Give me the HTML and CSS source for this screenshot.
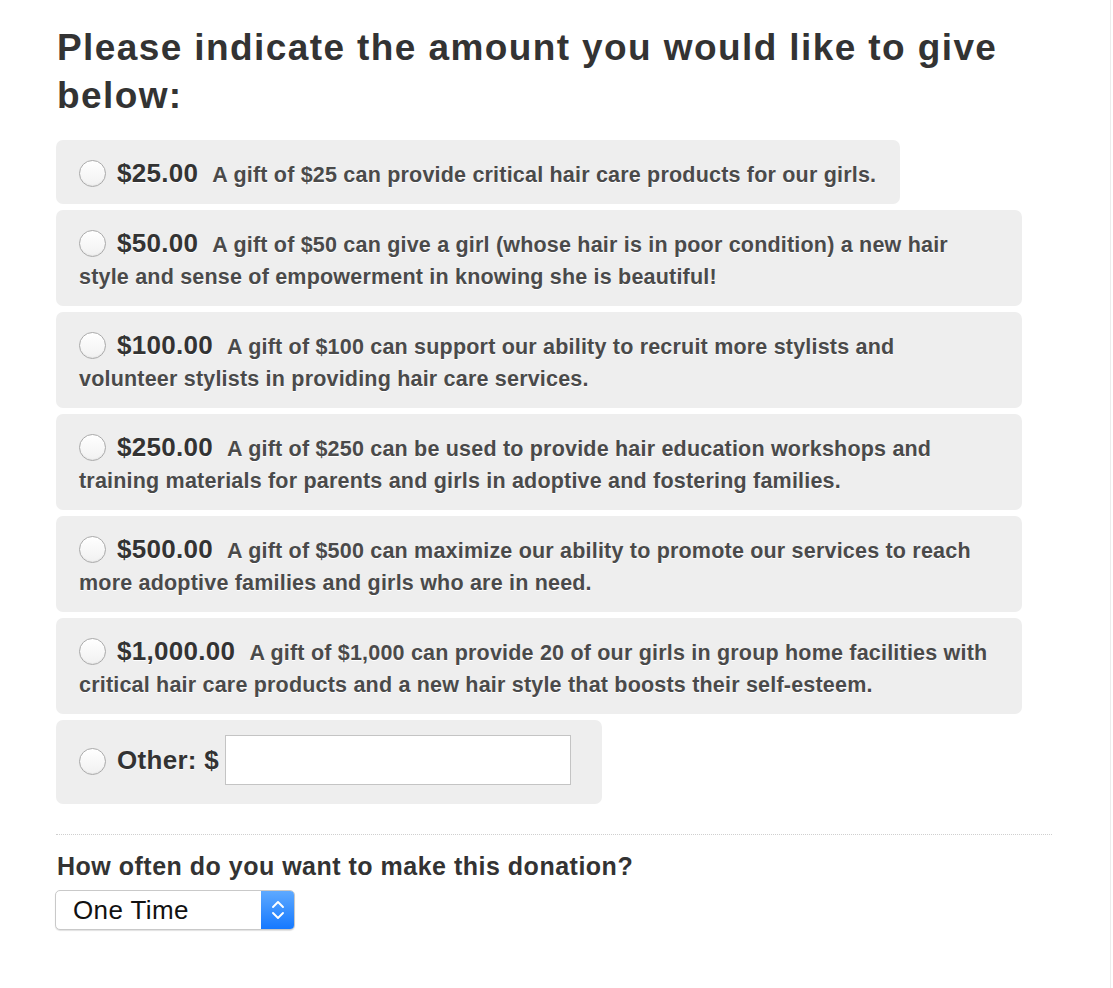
FILE: index.html
```html
<!DOCTYPE html>
<html lang="en">
<head>
<meta charset="utf-8">
<title>Donation amount</title>
<link rel="stylesheet" href="styles.css">
</head>
<body>
<div class="frame">
  <div class="page">
    <h2 class="title">Please indicate the amount you would like to give below:</h2>
    <div class="options">
      <label class="option"><input class="radio" type="radio" name="amt"><span class="amount">$25.00</span><span class="desc">A gift of $25 can provide critical hair care products for our girls.</span></label>
      <label class="option"><input class="radio" type="radio" name="amt"><span class="amount">$50.00</span><span class="desc">A gift of $50 can give a girl (whose hair is in poor condition) a new hair style and sense of empowerment in knowing she is beautiful!</span></label>
      <label class="option"><input class="radio" type="radio" name="amt"><span class="amount">$100.00</span><span class="desc">A gift of $100 can support our ability to recruit more stylists and volunteer stylists in providing hair care services.</span></label>
      <label class="option"><input class="radio" type="radio" name="amt"><span class="amount">$250.00</span><span class="desc">A gift of $250 can be used to provide hair education workshops and training materials for parents and girls in adoptive and fostering families.</span></label>
      <label class="option"><input class="radio" type="radio" name="amt"><span class="amount">$500.00</span><span class="desc">A gift of $500 can maximize our ability to promote our services to reach more adoptive families and girls who are in need.</span></label>
      <label class="option"><input class="radio" type="radio" name="amt"><span class="amount">$1,000.00</span><span class="desc">A gift of $1,000 can provide 20 of our girls in group home facilities with critical hair care products and a new hair style that boosts their self-esteem.</span></label>
      <label class="option option-other"><input class="radio" type="radio" name="amt"><span class="amount">Other: $</span><input class="other-input" type="text"></label>
    </div>
    <div class="sep"></div>
    <h3 class="freq-title">How often do you want to make this donation?</h3>
    <div class="select">
      <span class="select-text">One Time</span>
      <span class="select-btn">
        <svg width="16" height="26" viewBox="0 0 16 26"><path d="M3 10 L8 5 L13 10" fill="none" stroke="#fff" stroke-width="1.9" stroke-linecap="round" stroke-linejoin="round"/><path d="M3 16 L8 21 L13 16" fill="none" stroke="#fff" stroke-width="1.9" stroke-linecap="round" stroke-linejoin="round"/></svg>
      </span>
    </div>
  </div>
</div>
</body>
</html>
```

FILE: styles.css
```css
html, body {
  margin: 0;
  padding: 0;
  background: #fff;
}
body {
  font-family: "Liberation Sans", Arial, Helvetica, sans-serif;
  color: #333;
}
.frame {
  width: 1111px;
  min-height: 988px;
  box-sizing: border-box;
  border-right: 1px solid #ececec;
}
.page {
  width: 996px;
  padding: 24px 0 0 56px;
}
.title {
  margin: 0 0 20px 0;
  font-size: 37px;
  line-height: 48px;
  letter-spacing: 1.4px;
  font-weight: bold;
  color: #333;
  padding-left: 1px;
}
.options {
  display: flex;
  flex-direction: column;
  align-items: flex-start;
  gap: 6px;
}
.option {
  display: block;
  box-sizing: border-box;
  max-width: 966px;
  background: #eeeeee;
  border-radius: 7px;
  padding: 19px 24px 13px 23px;
  font-size: 21.5px;
  line-height: 32px;
  text-shadow: 0 1px 0 #fff;
}
.radio {
  -webkit-appearance: none;
  appearance: none;
  width: 27px;
  height: 27px;
  margin: 0 11px 0 0;
  border-radius: 50%;
  border: 1px solid #aaaaaa;
  background: linear-gradient(#ffffff, #f1f1f1);
  box-shadow: inset 0 -1px 1px rgba(0,0,0,0.05);
  vertical-align: -5px;
  box-sizing: border-box;
}
.amount {
  font-size: 26px;
  line-height: 28px;
  font-weight: bold;
  color: #333;
  letter-spacing: 0.3px;
  margin-right: 14px;
}
.desc {
  font-size: 21.5px;
  font-weight: bold;
  letter-spacing: 0.2px;
  color: #4a4a4a;
}
.option-other {
  display: flex;
  align-items: center;
  padding: 15px 31px 19px 23px;
  line-height: 52px;
}
.option-other .radio {
  margin-top: 2px;
}
.option-other .amount {
  margin-right: 6px;
}
.other-input {
  width: 346px;
  height: 50px;
  box-sizing: border-box;
  border: 1px solid #c4c4c4;
  background: #fff;
  margin: 0;
  padding: 4px 8px;
  font-size: 20px;
  font-family: "Liberation Sans", Arial, sans-serif;
}
.sep {
  margin-top: 30px;
  border-top: 1px dotted #cfcfcf;
}
.freq-title {
  margin: 16px 0 9px 0;
  font-size: 25px;
  line-height: 30px;
  letter-spacing: 0.5px;
  font-weight: bold;
  color: #333;
  padding-left: 1px;
}
.select {
  display: flex;
  width: 240px;
  height: 40px;
  box-sizing: border-box;
  border: 1px solid #c9c9c9;
  border-radius: 5px;
  background: #fff;
  box-shadow: 0 1px 1px rgba(0,0,0,0.12);
  overflow: hidden;
  margin-left: -1px;
}
.select-text {
  flex: 1;
  padding-left: 17px;
  font-size: 26px;
  letter-spacing: 0.4px;
  line-height: 38px;
  color: #111;
}
.select-btn {
  width: 33px;
  display: flex;
  align-items: center;
  justify-content: center;
  background: linear-gradient(#5ea9ff, #1679ff);
}
```
